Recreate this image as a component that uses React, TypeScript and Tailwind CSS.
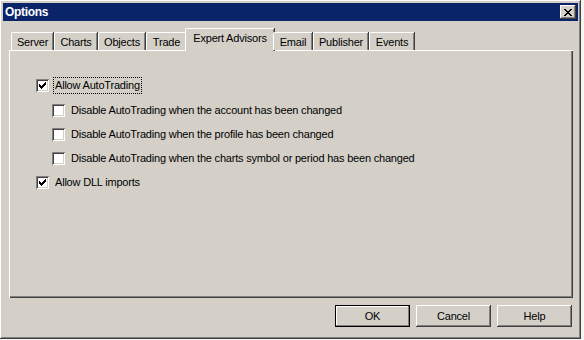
import React from 'react';

const raised =
  'shadow-[inset_-1px_-1px_#404040,inset_1px_1px_#ffffff,inset_-2px_-2px_#808080,inset_2px_2px_#d4d0c8]';

const tabs = [
  { name: 'Server', w: 'w-[42px]' },
  { name: 'Charts', w: 'w-[43px]' },
  { name: 'Objects', w: 'w-[47px]' },
  { name: 'Trade', w: 'w-[40px]' },
  { name: 'Expert Advisors', w: 'w-[89px]', active: true },
  { name: 'Email', w: 'w-[39px]' },
  { name: 'Publisher', w: 'w-[55px]' },
  { name: 'Events', w: 'w-[45px]' },
];

const options = [
  { label: 'Allow AutoTrading', checked: true, indent: false, focus: true, h: 'h-[26px]' },
  { label: 'Disable AutoTrading when the account has been changed', checked: false, indent: true, h: 'h-[24px]' },
  { label: 'Disable AutoTrading when the profile has been changed', checked: false, indent: true, h: 'h-[25px]' },
  { label: 'Disable AutoTrading when the charts symbol or period has been changed', checked: false, indent: true, h: 'h-[23px]' },
  { label: 'Allow DLL imports', checked: true, indent: false, h: 'h-[24px]' },
];

const CheckMark = () => (
  <svg width="7" height="7" viewBox="0 0 7 7" shapeRendering="crispEdges">
    <path
      d="M0 2h1v3H0z M1 3h1v3H1z M2 4h1v3H2z M3 3h1v3H3z M4 2h1v3H4z M5 1h1v3H5z M6 0h1v3H6z"
      fill="#000"
    />
  </svg>
);

const Checkbox = ({ checked }: { checked: boolean }) => (
  <div className="w-[13px] h-[13px] shrink-0 bg-white flex items-center justify-center shadow-[inset_1px_1px_#808080,inset_-1px_-1px_#ffffff,inset_2px_2px_#404040,inset_-2px_-2px_#d4d0c8]">
    {checked && <CheckMark />}
  </div>
);

const CloseGlyph = () => (
  <svg width="8" height="7" viewBox="0 0 8 7" shapeRendering="crispEdges">
    <path
      d="M0 0h2v1H0z M6 0h2v1H6z M1 1h2v1H1z M5 1h2v1H5z M2 2h4v1H2z M3 3h2v1H3z M2 4h4v1H2z M1 5h2v1H1z M5 5h2v1H5z M0 6h2v1H0z M6 6h2v1H6z"
      fill="#000"
    />
  </svg>
);

const App = () => {
  return (
    <div className="w-[584px] h-[340px] bg-[#f4f4f4] font-['Liberation_Sans',Arial,sans-serif] text-[11px] tracking-[-0.2px] text-black leading-none">
      <div className={`w-[581px] h-[339px] bg-[#d4d0c8] p-[3px] flex flex-col ${raised}`}>
        {/* Title bar */}
        <div className="h-[18px] bg-[#0a246a] flex items-center justify-between pl-[2px] pr-[2px]">
          <span className="text-white font-bold text-[12px] tracking-[-0.3px]">Options</span>
          <div className={`w-[16px] h-[14px] bg-[#d4d0c8] flex items-center justify-center ${raised}`}>
            <CloseGlyph />
          </div>
        </div>

        {/* Body */}
        <div className="flex flex-col pl-[6px] pt-[7px]">
          <div className="flex items-end h-[22px] pl-[2px] relative z-10">
            {tabs.map((t) =>
              t.active ? (
                <div
                  key={t.name}
                  className={`${t.w} -ml-[2px] -mr-[1px] h-[23px] -mb-[1px] bg-[#d4d0c8] flex items-start justify-center pt-[4px] border-t border-l border-white rounded-tl-[2px] shadow-[inset_-1px_0_#808080,1px_0_#404040]`}
                >
                  {t.name}
                </div>
              ) : (
                <div
                  key={t.name}
                  className={`${t.w} h-[18px] bg-[#d4d0c8] flex items-start justify-center pt-[4px] border-t border-l border-white rounded-tl-[2px] shadow-[inset_-1px_0_#808080,1px_0_#404040] mr-[1px]`}
                >
                  {t.name}
                </div>
              )
            )}
          </div>

          {/* Panel */}
          <div className="w-[564px] h-[248px] border-t border-l border-white shadow-[inset_-1px_-1px_#404040,inset_-2px_-2px_#808080] pl-[26px] pt-[21px] flex flex-col">
            {options.map((o) => (
              <div key={o.label} className={`${o.h} flex items-center ${o.indent ? 'pl-[16px]' : ''}`}>
                <Checkbox checked={o.checked} />
                {o.focus ? (
                  <span className="ml-[4px] px-[1px] py-[2px] border border-dotted border-black">{o.label}</span>
                ) : (
                  <span className="ml-[6px]">{o.label}</span>
                )}
              </div>
            ))}
          </div>
        </div>

        {/* Buttons */}
        <div className="flex justify-end gap-[6px] pr-[6px] mt-[7px]">
          <div className="w-[75px] h-[22px] border border-black bg-[#d4d0c8] flex items-center justify-center shadow-[inset_-1px_-1px_#808080,inset_1px_1px_#ffffff]">
            OK
          </div>
          <div className={`w-[75px] h-[22px] bg-[#d4d0c8] flex items-center justify-center ${raised}`}>Cancel</div>
          <div className={`w-[75px] h-[22px] bg-[#d4d0c8] flex items-center justify-center ${raised}`}>Help</div>
        </div>
      </div>
    </div>
  );
};

export default App;
